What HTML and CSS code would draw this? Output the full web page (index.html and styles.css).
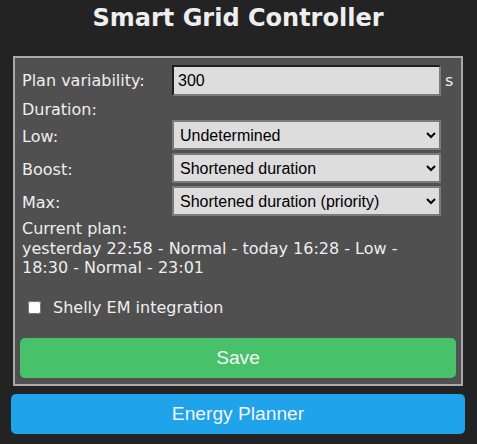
FILE: index.html
```html
<!DOCTYPE html>
<html lang="en">
<head>
<meta charset="utf-8">
<title>Smart Grid Controller</title>
<link rel="stylesheet" href="styles.css">
</head>
<body>
<div class="page">
  <h1 class="title">Smart Grid Controller</h1>
  <fieldset class="panel">
    <div class="form">
      <label class="lbl" for="var">Plan variability:</label>
      <input class="field" id="var" type="text" value="300">
      <span class="unit">s</span>

      <div class="lbl heading">Duration:</div>

      <label class="lbl" for="low">Low:</label>
      <select class="field sel" id="low"><option>Undetermined</option></select>
      <span></span>

      <label class="lbl" for="boost">Boost:</label>
      <select class="field sel" id="boost"><option>Shortened duration</option></select>
      <span></span>

      <label class="lbl" for="max">Max:</label>
      <select class="field sel" id="max"><option>Shortened duration (priority)</option></select>
      <span></span>
    </div>
    <div class="plan">
      <div class="plan-title">Current plan:</div>
      <div class="plan-text">yesterday 22:58 - Normal - today 16:28 - Low - 18:30 - Normal - 23:01</div>
    </div>
    <label class="check">
      <input type="checkbox" class="box">
      <span>Shelly EM integration</span>
    </label>
    <button class="btn save" type="button">Save</button>
  </fieldset>
  <button class="btn planner" type="button">Energy Planner</button>
</div>
</body>
</html>
```

FILE: styles.css
```css
html, body {
  margin: 0;
  padding: 0;
  background: #232323;
}

body {
  font-family: "DejaVu Sans", Verdana, sans-serif;
  font-size: 16px;
  color: #eeeeee;
}

.page {
  width: 454px;
  margin-left: 11px;
}

.title {
  margin: 4px 0 24px;
  font-size: 24px;
  line-height: 28px;
  font-weight: bold;
  text-align: center;
  color: #eeeeee;
}

.panel {
  margin: 0 2px;
  padding: 5px 5px 6px;
  border: 2px solid #a9a9a9;
  background: #505050;
  min-width: 0;
}

.form {
  display: grid;
  grid-template-columns: 150px 269px 1fr;
  align-items: center;
  padding-left: 2px;
}

.lbl {
  line-height: 19px;
}

.heading {
  grid-column: 1 / -1;
  margin: 2px 0 1px;
}

.field {
  box-sizing: border-box;
  width: 269px;
  height: 31px;
  font-family: "Liberation Sans", Arial, sans-serif;
  font-size: 16px;
  color: #000;
  background: #dddddd;
  margin: 2px 0;
}

input.field {
  padding: 0 4px;
  border-style: solid;
  border-width: 2px;
  border-color: #1e1e1e #7a7a7a #7a7a7a #1e1e1e;
  outline: none;
}

.sel {
  height: 30px;
  margin: 0 0 3px;
  padding: 0 3px 0 2px;
  border: 2px solid #7a7a7a;
  border-radius: 0;
}

.unit {
  padding-left: 4px;
  line-height: 19px;
}

.plan {
  padding-left: 2px;
  line-height: 19px;
}

.plan-text {
  margin-top: 1px;
  padding-right: 10px;
}

.check {
  display: flex;
  align-items: center;
  margin-top: 21px;
  line-height: 19px;
}

.box {
  width: 13px;
  height: 13px;
  margin: 0 12px 0 8px;
}

.btn {
  display: block;
  box-sizing: border-box;
  height: 40px;
  border: none;
  border-radius: 5px;
  font-family: "Liberation Sans", Arial, sans-serif;
  font-size: 19.2px;
  color: #f4f4f4;
  cursor: pointer;
}

.save {
  width: 100%;
  margin-top: 21px;
  background: #47c26a;
}

.planner {
  width: 454px;
  margin-top: 8px;
  background: #1fa3eb;
}
```
